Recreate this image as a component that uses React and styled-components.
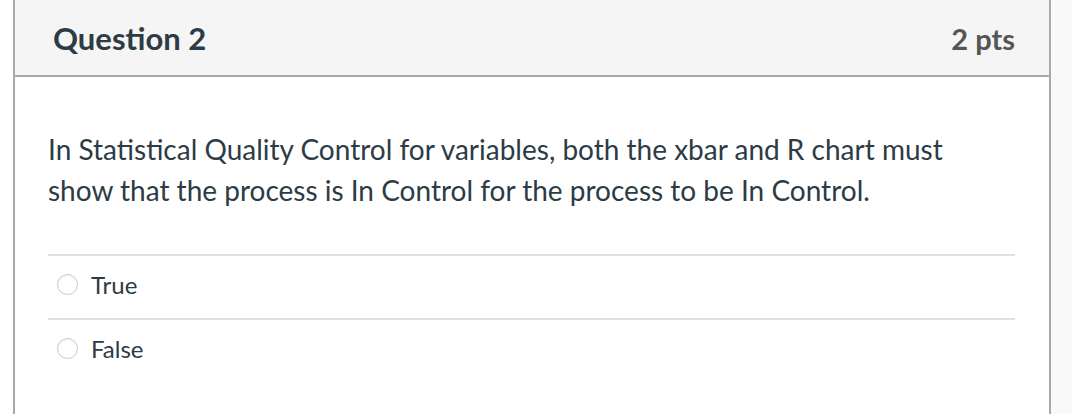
import React from "react";
import styled, { createGlobalStyle } from "styled-components";

const GlobalStyle = createGlobalStyle`
  html, body {
    margin: 0;
    padding: 0;
    background: #ffffff;
  }
  body {
    font-family: Lato, "Open Sans", "Liberation Sans", sans-serif;
  }
`;

const Page = styled.div`
  display: flex;
  min-height: 414px;
  background: linear-gradient(to right, #ffffff 0, #ffffff 1051px, #f9f9f9 1051px);
  padding-left: 13px;
`;

const Card = styled.div`
  width: 1034px;
  border-left: 2px solid #a9a9a9;
  border-right: 2px solid #a9a9a9;
  background: #ffffff;
`;

const Header = styled.div`
  height: 77px;
  display: flex;
  align-items: center;
  justify-content: space-between;
  padding: 1px 34px 0 38px;
  box-sizing: border-box;
  background: #f5f5f5;
  border-bottom: 2px solid #a9a9a9;
`;

const Title = styled.h2`
  margin: 0;
  font-size: 31px;
  font-weight: 700;
  color: #2d3b45;
`;

const Points = styled.div`
  font-size: 29px;
  font-weight: 700;
  color: #555555;
`;

const Body = styled.div`
  padding: 52px 34px 40px 33px;
`;

const QuestionText = styled.p`
  margin: 0 0 43px;
  font-size: 28px;
  line-height: 41px;
  color: #2d3b45;
`;

const Answers = styled.div`
  display: flex;
  flex-direction: column;
`;

const Answer = styled.label`
  display: flex;
  align-items: center;
  gap: 13px;
  height: 64px;
  box-sizing: border-box;
  padding: 0 0 6px 9px;
  border-top: 2px solid #dedede;
  font-size: 24px;
  color: #2d3b45;
`;

const Radio = styled.span`
  flex: none;
  width: 19px;
  height: 19px;
  border-radius: 50%;
  border: 1px solid #c8c8c8;
  background: #fff;
  box-shadow: inset 0 1px 2px rgba(0, 0, 0, 0.06);
`;

const answers = ["True", "False"];

export default function App() {
  return (
    <>
      <GlobalStyle />
      <Page>
        <Card>
          <Header>
            <Title>Question 2</Title>
            <Points>2 pts</Points>
          </Header>
          <Body>
            <QuestionText>
              In Statistical Quality Control for variables, both the xbar and R chart must
              <br />
              show that the process is In Control for the process to be In Control.
            </QuestionText>
            <Answers>
              {answers.map((a) => (
                <Answer key={a}>
                  <Radio />
                  {a}
                </Answer>
              ))}
            </Answers>
          </Body>
        </Card>
      </Page>
    </>
  );
}
